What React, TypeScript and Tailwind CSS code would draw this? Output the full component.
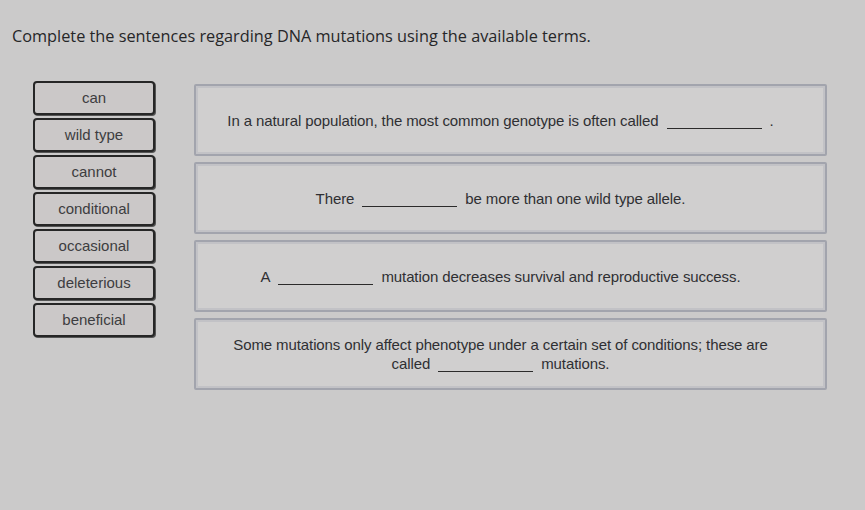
import React from 'react';

const terms = ['can', 'wild type', 'cannot', 'conditional', 'occasional', 'deleterious', 'beneficial'];

const Blank: React.FC = () => (
  <span className="mx-[8px] inline-block h-[15px] w-[95px] translate-y-[3px] border-b border-[#2b2b2b] align-baseline" />
);

const TermChip: React.FC<{ label: string }> = ({ label }) => (
  <div className="flex h-[34px] items-center justify-center rounded-[4px] border-2 border-[#262626] bg-[#cbc8c8] text-[15px] text-[#3d3d40] shadow-[1px_1px_0_#555]">
    {label}
  </div>
);

const Card: React.FC<{ children: React.ReactNode }> = ({ children }) => (
  <div className="flex h-[72px] items-center justify-center rounded-[2px] border-2 border-[#a2a4ad] bg-[#d0cfcf] pl-4 pr-[36px] text-center text-[15px] leading-[18px] tracking-[-0.1px] text-[#2f2f33] shadow-[inset_0_0_0_2px_#c2c2c6]">
    <p>{children}</p>
  </div>
);

export default function App() {
  return (
    <div className="h-[510px] w-[865px] overflow-hidden bg-[#cbcaca] font-['Liberation_Sans',Arial,sans-serif]">
      <h1 className="pl-3 pt-[26px] font-['Open_Sans',sans-serif] text-[16.3px] leading-5 text-[#262628]">
        Complete the sentences regarding DNA mutations using the available terms.
      </h1>

      <div className="mt-[35px] flex gap-[39px] pl-[33px]">
        <div className="flex w-[122px] flex-col gap-[3px]">
          {terms.map((term) => (
            <TermChip key={term} label={term} />
          ))}
        </div>

        <div className="flex w-[633px] flex-col gap-[6px] pt-[3px]">
          <Card>
            In a natural population, the most common genotype is often called
            <Blank />.
          </Card>
          <Card>
            There
            <Blank />
            be more than one wild type allele.
          </Card>
          <Card>
            A
            <Blank />
            mutation decreases survival and reproductive success.
          </Card>
          <Card>
            Some mutations only affect phenotype under a certain set of conditions; these are
            <br />
            called
            <Blank />
            mutations.
          </Card>
        </div>
      </div>
    </div>
  );
}
